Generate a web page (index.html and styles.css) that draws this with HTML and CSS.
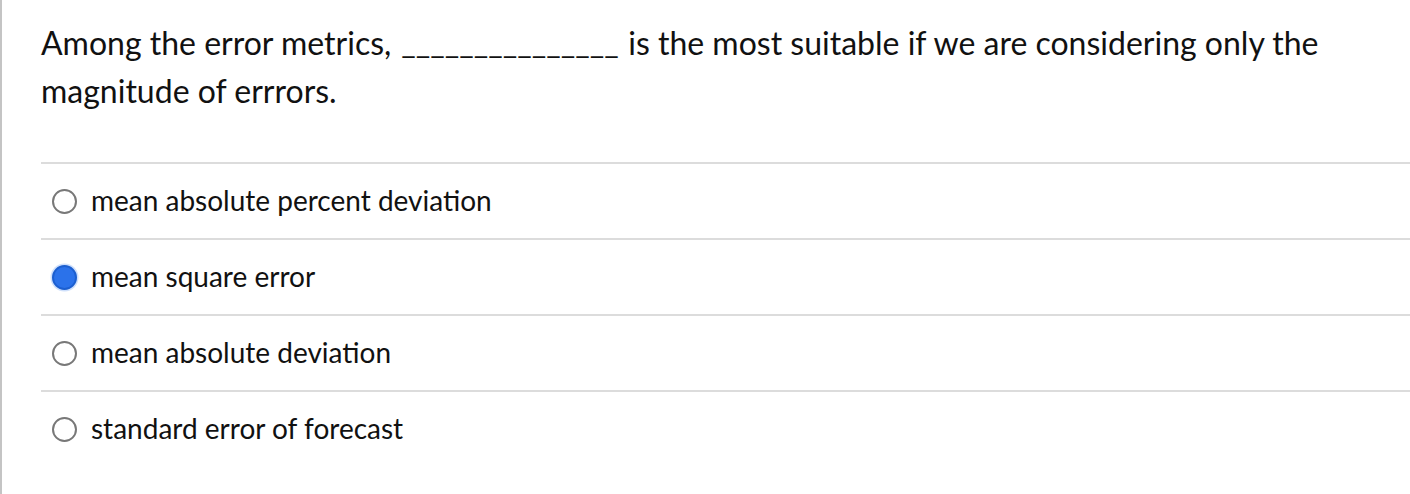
FILE: index.html
```html
<!DOCTYPE html>
<html>
<head>
<meta charset="utf-8">
<link rel="stylesheet" href="styles.css">
</head>
<body>
<div class="page">
  <div class="question">
    <p class="prompt">Among the error metrics, <span class="blank">_______________</span> is the most suitable if we are considering only the magnitude of errrors.</p>
    <div class="answers">
      <label class="answer"><span class="radio"></span><span class="label">mean absolute percent deviation</span></label>
      <label class="answer"><span class="radio checked"></span><span class="label">mean square error</span></label>
      <label class="answer"><span class="radio"></span><span class="label">mean absolute deviation</span></label>
      <label class="answer"><span class="radio"></span><span class="label">standard error of forecast</span></label>
    </div>
  </div>
</div>
</body>
</html>
```
FILE: styles.css
```css
html, body {
  margin: 0;
  padding: 0;
  background: #fff;
}
.page {
  height: 494px;
  border-left: 2px solid #c4c4c4;
  box-sizing: border-box;
  font-family: Lato, "Open Sans", sans-serif;
  color: #111;
}
.question {
  padding: 19px 0 0 39px;
}
.prompt {
  margin: 0;
  font-size: 32px;
  line-height: 48px;
  padding-right: 60px;
}
.blank {
  font-family: "Liberation Serif", serif;
  font-size: 24px;
  font-weight: bold;
  line-height: 1;
  letter-spacing: 2.5px;
  margin-left: 3px;
}
.answers {
  margin-top: 47px;
}
.answer {
  display: flex;
  align-items: center;
  height: 72px;
  border-top: 2px solid #dcdcdc;
  gap: 14px;
  padding-left: 11px;
  padding-bottom: 2px;
}
.radio {
  width: 25px;
  height: 25px;
  border: 2px solid #787878;
  border-radius: 50%;
  box-sizing: border-box;
  flex: none;
  margin-top: 3px;
}
.radio.checked {
  border: 2px solid #1c5fd0;
  background: #2b72ea;
  box-shadow: 0 0 0 1.5px #cfe0fb;
}
.label {
  font-size: 28px;
  margin-top: -1px;
}
```
